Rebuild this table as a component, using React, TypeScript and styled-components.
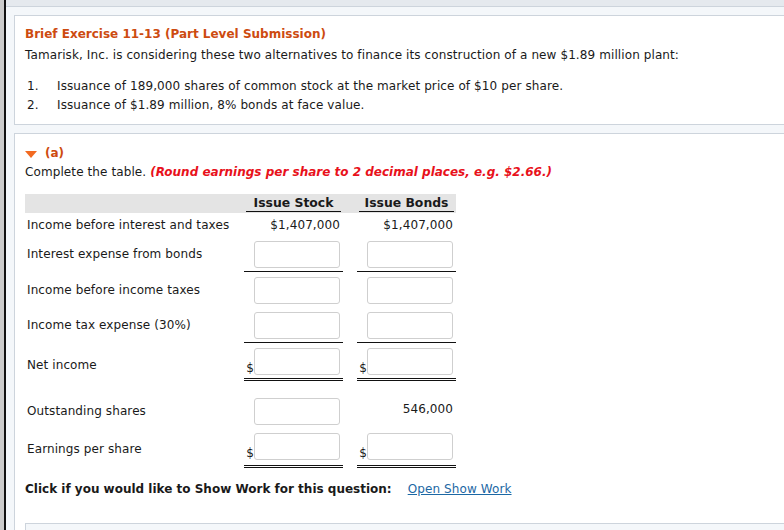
import React from "react";
import styled, { createGlobalStyle } from "styled-components";

const Global = createGlobalStyle`
  html, body { margin: 0; padding: 0; }
  body {
    font-family: "DejaVu Sans", Verdana, sans-serif;
    font-size: 12px;
    letter-spacing: 0.1px;
    color: #1a1a1a;
    background: #ffffff;
  }
`;

const Page = styled.div`
  display: flex;
  width: 784px;
  height: 530px;
  overflow: hidden;
`;

const Rail = styled.div`
  width: 4px;
  flex: none;
  background: #cbcbcb;
  border-right: 2px solid #111;
`;

const Main = styled.div`
  flex: 1;
  display: flex;
  flex-direction: column;
  min-width: 0;
`;

const TopStrip = styled.div`
  height: 6px;
  flex: none;
  background: #e5e9ee;
  border-bottom: 1px solid #cdd4dc;
`;

const Content = styled.div`
  flex: 1;
  background: #f4f7fa;
  padding: 8px 0 0 8px;
  display: flex;
  flex-direction: column;
  gap: 8px;
`;

const Card = styled.section<{ $pt: number; $pb: number }>`
  background: #fff;
  border: 1px solid #cdd4dc;
  border-right: none;
  padding: ${(p) => p.$pt}px 0 ${(p) => p.$pb}px 10px;
`;

const Title = styled.div`
  font-weight: bold;
  font-size: 12px;
  letter-spacing: 0;
  color: #cd4b10;
  line-height: 21px;
`;

const Para = styled.div<{ $mt?: number }>`
  line-height: 20px;
  margin-top: ${(p) => p.$mt ?? 0}px;
`;

const List = styled.ol`
  list-style: none;
  margin: 12px 0 0 0;
  padding: 0;
`;

const Item = styled.li`
  display: flex;
  line-height: 19px;
`;

const Num = styled.span`
  width: 30px;
  padding-left: 2px;
  flex: none;
`;

const PartHead = styled.div`
  display: flex;
  align-items: center;
  gap: 8px;
  line-height: 20px;
`;

const Triangle = styled.span`
  width: 0;
  height: 0;
  border-left: 6px solid transparent;
  border-right: 6px solid transparent;
  border-top: 7px solid #f26a21;
  margin-top: 2px;
`;

const PartLabel = styled.span`
  font-weight: bold;
  font-size: 12px;
  letter-spacing: 0;
  color: #cd4b10;
`;

const Hint = styled.span`
  color: #e8111b;
  font-weight: bold;
  font-style: italic;
  letter-spacing: 0;
`;

const Grid = styled.div`
  display: grid;
  grid-template-columns: 219px 99px 14px 99px;
  margin-top: 12px;
  width: 431px;
`;

const HeadBar = styled.div`
  grid-column: 1 / -1;
  display: grid;
  grid-template-columns: 219px 99px 14px 99px;
  background: #e4e4e4;
  height: 19px;
`;

const HeadCell = styled.div`
  display: flex;
  align-items: flex-end;
  padding: 0 2px 1px 2px;
`;

const HeadText = styled.div`
  flex: 1;
  text-align: center;
  font-weight: bold;
  font-size: 12.4px;
  letter-spacing: 0;
  line-height: 16px;
  border-bottom: 1.5px solid #111;
`;

const Label = styled.div<{ $pt: number }>`
  line-height: 16px;
  padding: ${(p) => p.$pt}px 0 0 2px;
`;

type Rule = "none" | "single" | "double";

const Cell = styled.div<{ $pt: number; $pb: number; $rule: Rule }>`
  display: flex;
  align-items: flex-end;
  justify-content: flex-end;
  padding: ${(p) => p.$pt}px 3px ${(p) => p.$pb}px 4px;
  border-bottom: ${(p) =>
    p.$rule === "single"
      ? "1px solid #111"
      : p.$rule === "double"
      ? "3px double #111"
      : "none"};
`;

const Gap = styled.div``;

const Dollar = styled.span`
  flex: 1;
  font-size: 12px;
  line-height: 12px;
  padding-bottom: 1px;
`;

const Box = styled.input`
  width: 86px;
  height: 27px;
  box-sizing: border-box;
  border: 1px solid #cfcfcf;
  border-radius: 3px;
  background: #fff;
  margin: 0;
  padding: 0;
  flex: none;
`;

const Value = styled.div<{ $top?: number }>`
  text-align: right;
  line-height: 16px;
  align-self: ${(p) => (p.$top !== undefined ? "flex-start" : "flex-end")};
  margin-top: ${(p) => p.$top ?? 0}px;
`;

const ShowWork = styled.div`
  display: flex;
  gap: 16px;
  margin-top: 11px;
  line-height: 20px;
`;

const ShowLabel = styled.span`
  font-weight: bold;
  font-size: 12px;
  letter-spacing: 0;
`;

const Link = styled.a`
  color: #1c68a4;
  text-decoration: underline;
  cursor: pointer;
`;

const SubBox = styled.div`
  margin-top: 24px;
  height: 20px;
  border: 1px solid #cdd4dc;
  border-right: none;
  background: #f4f7fa;
`;

type RowSpec = {
  label: string;
  lt: number;
  pt: number;
  pb: number;
  rule: Rule;
  rule2?: Rule;
  c1: React.ReactNode;
  c2: React.ReactNode;
};

const input = (dollar?: boolean) => (
  <>
    {dollar && <Dollar>$</Dollar>}
    <Box type="text" aria-label="answer" />
  </>
);

const rows: RowSpec[] = [
  {
    label: "Income before interest and taxes",
    lt: 4,
    pt: 4,
    pb: 3,
    rule: "none",
    c1: <Value>$1,407,000</Value>,
    c2: <Value>$1,407,000</Value>,
  },
  { label: "Interest expense from bonds", lt: 10, pt: 5, pb: 3, rule: "single", c1: input(), c2: input() },
  { label: "Income before income taxes", lt: 10, pt: 5, pb: 3, rule: "none", c1: input(), c2: input() },
  { label: "Income tax expense (30%)", lt: 10, pt: 5, pb: 3, rule: "single", c1: input(), c2: input() },
  { label: "Net income", lt: 14, pt: 5, pb: 3, rule: "double", c1: input(true), c2: input(true) },
  {
    label: "Outstanding shares",
    lt: 22,
    pt: 17,
    pb: 3,
    rule: "none",
    c1: input(),
    c2: <Value $top={3}>546,000</Value>,
  },
  { label: "Earnings per share", lt: 13, pt: 5, pb: 5, rule: "double", c1: input(true), c2: input(true) },
];

export default function App() {
  return (
    <Page>
      <Global />
      <Rail />
      <Main>
        <TopStrip />
        <Content>
          <Card $pt={8} $pb={9}>
            <Title>Brief Exercise 11-13 (Part Level Submission)</Title>
            <Para>
              Tamarisk, Inc. is considering these two alternatives to finance its construction of a new
              $1.89 million plant:
            </Para>
            <List>
              <Item>
                <Num>1.</Num>
                <span>Issuance of 189,000 shares of common stock at the market price of $10 per share.</span>
              </Item>
              <Item>
                <Num>2.</Num>
                <span>Issuance of $1.89 million, 8% bonds at face value.</span>
              </Item>
            </List>
          </Card>
          <Card $pt={9} $pb={10}>
            <PartHead>
              <Triangle />
              <PartLabel>(a)</PartLabel>
            </PartHead>
            <Para $mt={-1}>
              Complete the table. <Hint>(Round earnings per share to 2 decimal places, e.g. $2.66.)</Hint>
            </Para>
            <Grid>
              <HeadBar>
                <div />
                <HeadCell>
                  <HeadText>Issue Stock</HeadText>
                </HeadCell>
                <div />
                <HeadCell>
                  <HeadText>Issue Bonds</HeadText>
                </HeadCell>
              </HeadBar>
              {rows.map((r) => (
                <React.Fragment key={r.label}>
                  <Label $pt={r.lt}>{r.label}</Label>
                  <Cell $pt={r.pt} $pb={r.pb} $rule={r.rule}>
                    {r.c1}
                  </Cell>
                  <Gap />
                  <Cell $pt={r.pt} $pb={r.pb} $rule={r.rule2 ?? r.rule}>
                    {r.c2}
                  </Cell>
                </React.Fragment>
              ))}
            </Grid>
            <ShowWork>
              <ShowLabel>Click if you would like to Show Work for this question:</ShowLabel>
              <Link>Open Show Work</Link>
            </ShowWork>
            <SubBox />
          </Card>
        </Content>
      </Main>
    </Page>
  );
}
